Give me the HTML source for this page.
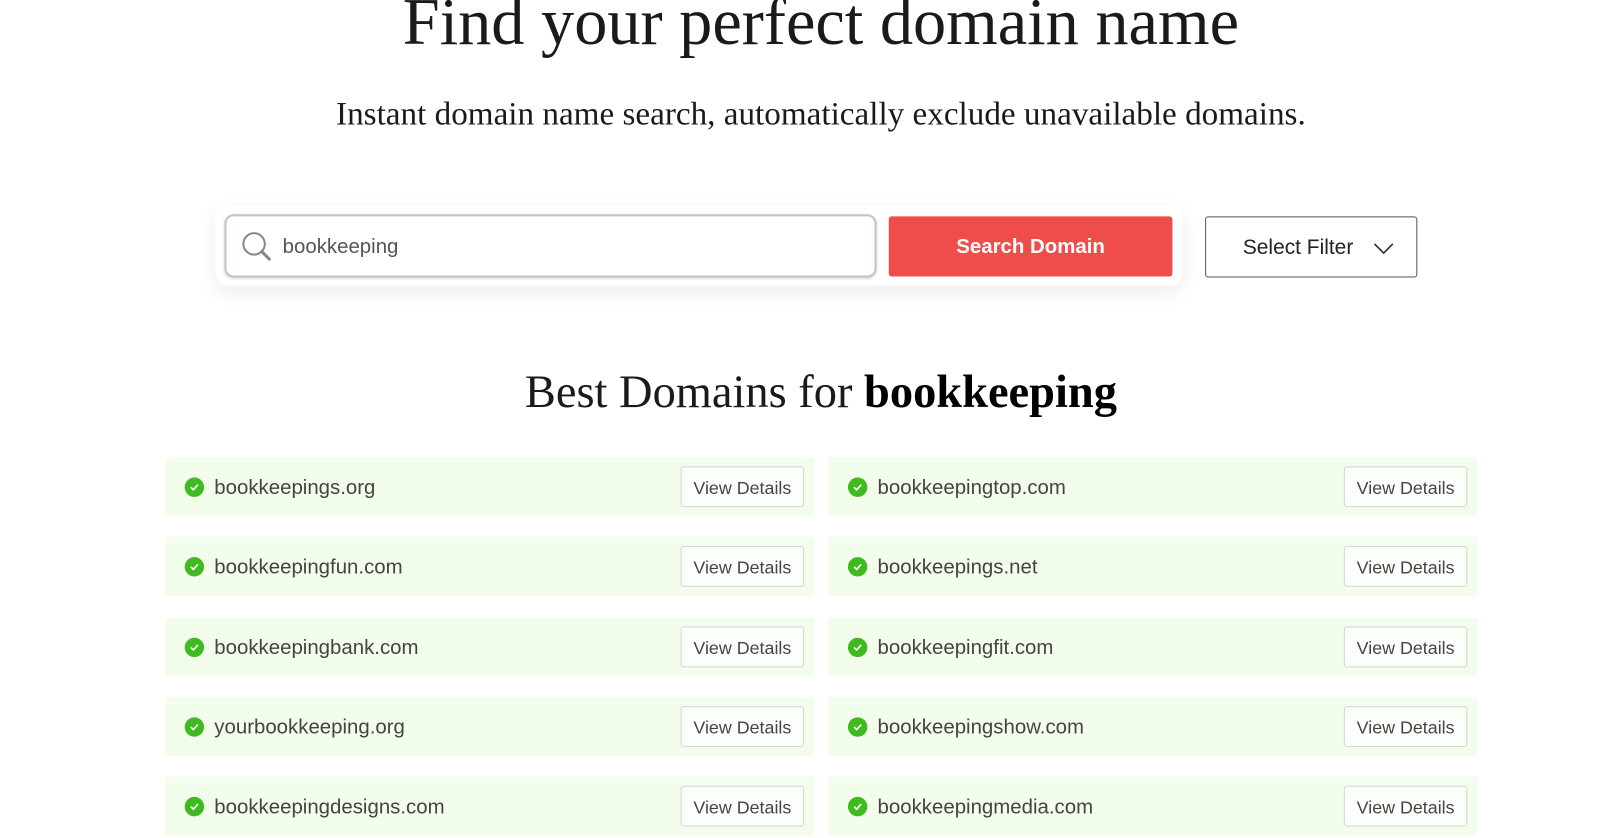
<!DOCTYPE html>
<html><head><meta charset="utf-8"><style>
*{box-sizing:border-box;margin:0;padding:0}
body{width:1600px;height:831px;overflow:hidden;background:#fff;font-family:"Liberation Sans",sans-serif;position:relative}
#s{position:absolute;left:0;top:0;width:1568px;height:815px;transform:scale(1.0204);transform-origin:0 0}
.serif{font-family:"Liberation Serif",serif;color:#1a1a1a}
.abs{position:absolute}
h1{position:absolute;left:0;width:1609px;text-align:center;top:-15px;font-size:65px;font-weight:normal;white-space:nowrap}
.sub{position:absolute;left:0;width:1609px;text-align:center;top:94px;font-size:32.5px;white-space:nowrap}
.wrap{left:211px;top:202px;width:948px;height:78px;background:#fff;border-radius:12px;box-shadow:0 6px 18px rgba(0,0,0,.08)}
.inp{left:220px;top:210px;width:639px;height:62px;border:2px solid #cdbfcb;border-radius:9px;background:#fff;box-shadow:0 1px 2px rgba(0,0,0,.15)}
.inp span{position:absolute;left:55px;top:1px;line-height:58px;font-size:20px;color:#555}
.btn{left:871px;top:212px;width:278px;height:59px;background:#ef4d4b;border-radius:3px;color:#fff;font-weight:bold;font-size:20px;text-align:center;line-height:60px}
.flt{left:1181px;top:212px;width:208px;height:60px;border:1px solid #555;border-radius:3px;font-size:20.5px;color:#222;line-height:60px;padding-left:36px}
h2{position:absolute;left:0;width:1609px;text-align:center;top:357px;font-size:45.5px;font-weight:normal;white-space:nowrap}
.card{position:absolute;width:636px;height:58px;background:#f3fdec;border-radius:3px}
.card .ck{position:absolute;left:19px;top:20px;width:19px;height:19px;border-radius:50%;background:#3fba1f}
.card .nm{position:absolute;left:48px;top:0;line-height:60px;font-size:20px;color:#444}
.card .vd{position:absolute;right:10px;top:9px;width:121px;height:40px;border:1px solid #d4d4d4;border-radius:3px;font-size:17.5px;color:#444;text-align:center;line-height:40px;background:#fbfffa}
</style></head><body><div id="s">
<h1 class="serif">Find your perfect domain name</h1>
<div class="sub serif">Instant domain name search, automatically exclude unavailable domains.</div>
<div class="abs wrap"></div>
<div class="abs inp"><svg style="position:absolute;left:14px;top:14px" width="32" height="32" viewBox="0 0 32 32"><circle cx="13" cy="13" r="10.5" fill="none" stroke="#888" stroke-width="2"/><path d="M20.5 20.5L28 28" stroke="#888" stroke-width="3" stroke-linecap="round"/></svg><span>bookkeeping</span></div>
<div class="abs btn">Search Domain</div>
<div class="abs flt">Select Filter<svg style="position:absolute;left:164px;top:25px" width="20" height="12" viewBox="0 0 20 12"><path d="M1 1l9 9 9-9" fill="none" stroke="#333" stroke-width="1.6"/></svg></div>
<h2 class="serif">Best Domains for <b style="color:#000">bookkeeping</b></h2>
<div class="card" style="left:162px;top:448px"><div class="ck"><svg width="19" height="19" viewBox="0 0 19 19"><path d="M6 9.5l2.5 2.5 4.5-5" fill="none" stroke="#fff" stroke-width="1.6"/></svg></div><div class="nm">bookkeepings.org</div><div class="vd">View Details</div></div>
<div class="card" style="left:812px;top:448px"><div class="ck"><svg width="19" height="19" viewBox="0 0 19 19"><path d="M6 9.5l2.5 2.5 4.5-5" fill="none" stroke="#fff" stroke-width="1.6"/></svg></div><div class="nm">bookkeepingtop.com</div><div class="vd">View Details</div></div>
<div class="card" style="left:162px;top:526px"><div class="ck"><svg width="19" height="19" viewBox="0 0 19 19"><path d="M6 9.5l2.5 2.5 4.5-5" fill="none" stroke="#fff" stroke-width="1.6"/></svg></div><div class="nm">bookkeepingfun.com</div><div class="vd">View Details</div></div>
<div class="card" style="left:812px;top:526px"><div class="ck"><svg width="19" height="19" viewBox="0 0 19 19"><path d="M6 9.5l2.5 2.5 4.5-5" fill="none" stroke="#fff" stroke-width="1.6"/></svg></div><div class="nm">bookkeepings.net</div><div class="vd">View Details</div></div>
<div class="card" style="left:162px;top:605px"><div class="ck"><svg width="19" height="19" viewBox="0 0 19 19"><path d="M6 9.5l2.5 2.5 4.5-5" fill="none" stroke="#fff" stroke-width="1.6"/></svg></div><div class="nm">bookkeepingbank.com</div><div class="vd">View Details</div></div>
<div class="card" style="left:812px;top:605px"><div class="ck"><svg width="19" height="19" viewBox="0 0 19 19"><path d="M6 9.5l2.5 2.5 4.5-5" fill="none" stroke="#fff" stroke-width="1.6"/></svg></div><div class="nm">bookkeepingfit.com</div><div class="vd">View Details</div></div>
<div class="card" style="left:162px;top:683px"><div class="ck"><svg width="19" height="19" viewBox="0 0 19 19"><path d="M6 9.5l2.5 2.5 4.5-5" fill="none" stroke="#fff" stroke-width="1.6"/></svg></div><div class="nm">yourbookkeeping.org</div><div class="vd">View Details</div></div>
<div class="card" style="left:812px;top:683px"><div class="ck"><svg width="19" height="19" viewBox="0 0 19 19"><path d="M6 9.5l2.5 2.5 4.5-5" fill="none" stroke="#fff" stroke-width="1.6"/></svg></div><div class="nm">bookkeepingshow.com</div><div class="vd">View Details</div></div>
<div class="card" style="left:162px;top:761px"><div class="ck"><svg width="19" height="19" viewBox="0 0 19 19"><path d="M6 9.5l2.5 2.5 4.5-5" fill="none" stroke="#fff" stroke-width="1.6"/></svg></div><div class="nm">bookkeepingdesigns.com</div><div class="vd">View Details</div></div>
<div class="card" style="left:812px;top:761px"><div class="ck"><svg width="19" height="19" viewBox="0 0 19 19"><path d="M6 9.5l2.5 2.5 4.5-5" fill="none" stroke="#fff" stroke-width="1.6"/></svg></div><div class="nm">bookkeepingmedia.com</div><div class="vd">View Details</div></div>
</div></body></html>
